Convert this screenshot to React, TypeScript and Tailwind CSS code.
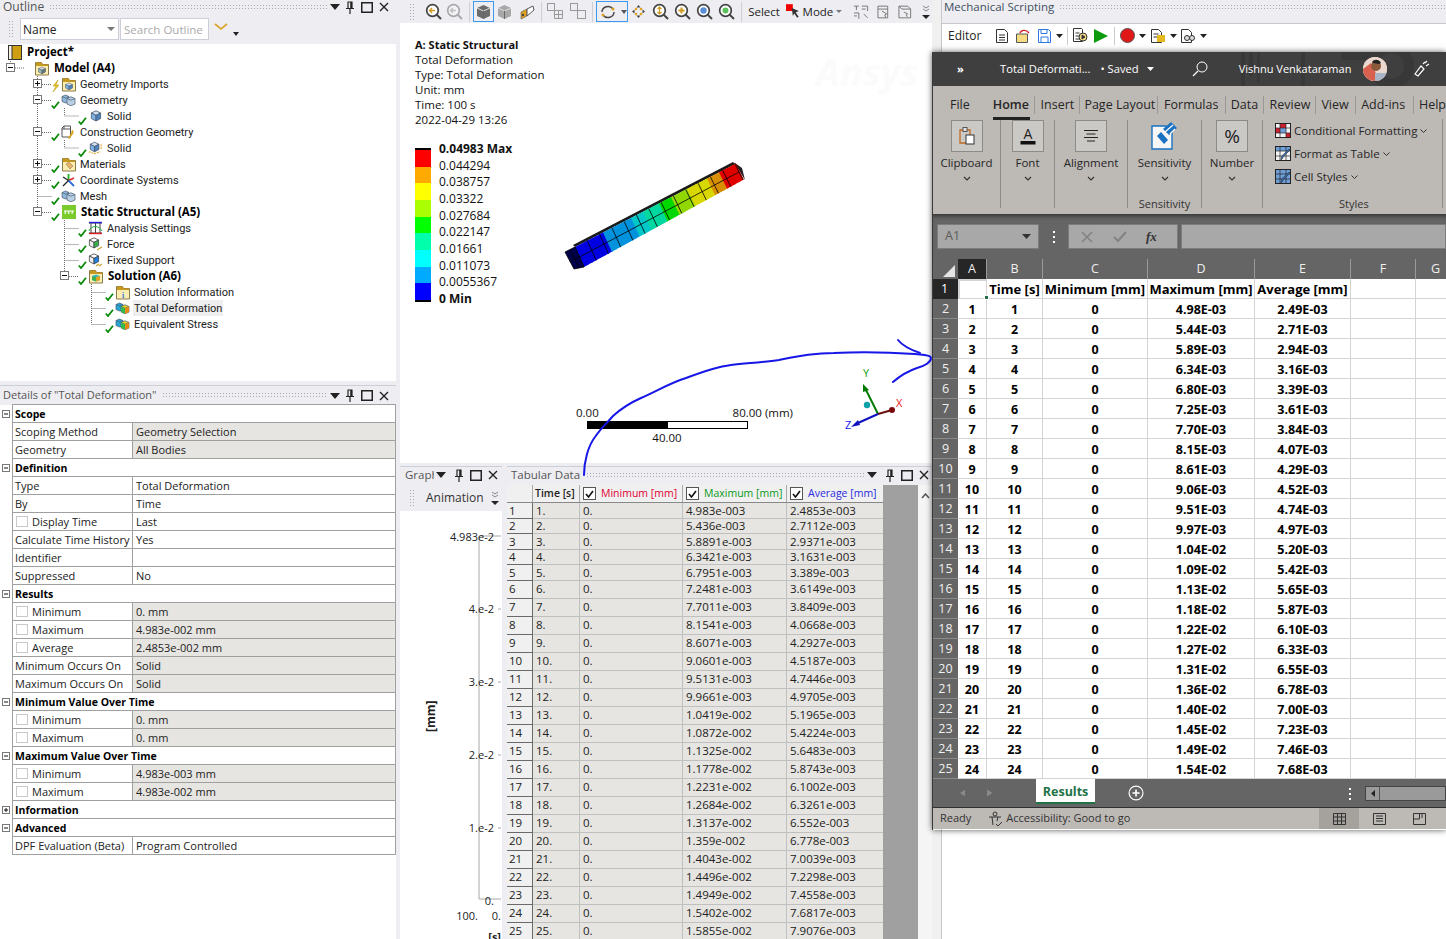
import React from "react";

const Pin = ({ c = "#222" }: { c?: string }) => (
  <svg width="10" height="13" viewBox="0 0 10 13"><path d="M2.5 1h5M3 1v6M7 1v6M1 7.5h8M5 8v5M5.8 1v6" stroke={c} strokeWidth="1.2" fill="none" /></svg>
);
const Controls = () => (
  <div className="flex items-center">
    <svg width="10" height="6" viewBox="0 0 10 6" className="mr-[5px]"><path d="M0 0h10L5 6z" fill="#222" /></svg>
    <Pin />
    <svg width="12" height="11" viewBox="0 0 12 11" className="ml-[6px]"><rect x=".75" y=".75" width="10.5" height="9.5" fill="none" stroke="#222" strokeWidth="1.5" /></svg>
    <svg width="10" height="10" viewBox="0 0 10 10" className="ml-[6px]"><path d="M1 1l8 8M9 1l-8 8" stroke="#222" strokeWidth="1.4" /></svg>
  </div>
);
const Dots = ({ className = "" }: { className?: string }) => (
  <div className={"bg-[radial-gradient(#a9a9b8_0.8px,transparent_0.9px)] bg-[length:3px_3px] " + className} />
);
const Check = () => (
  <svg width="9" height="8" viewBox="0 0 9 8" className="shrink-0 self-end mb-[-1px]"><path d="M.8 4.5L3 7 8 .8" stroke="#0a8a0a" strokeWidth="1.8" fill="none" /></svg>
);
const Folder = ({ children }: { children?: React.ReactNode }) => (
  <svg width="14" height="15" viewBox="0 0 14 15">
    <path d="M.5 4V1.5h6l1 2h6V14H.5z" fill="#fbeeb0" stroke="#8a7a48" />
    <path d="M1 1.5h5.5l1 2H13v1.5H1z" fill="#c79a1e" />
    {children}
  </svg>
);
const SmallCube = ({ f = "#7fb0e6", t = "#cfe2f7", s = "#4f82bf" }: { f?: string; t?: string; s?: string }) => (
  <g>
    <path d="M7 6l3.5 1.6L7 9.2 3.5 7.6z" fill={t} stroke="#456" strokeWidth=".5" />
    <path d="M3.5 7.6L7 9.2v3.6L3.5 11z" fill={f} stroke="#456" strokeWidth=".5" />
    <path d="M10.5 7.6L7 9.2v3.6l3.5-1.8z" fill={s} stroke="#456" strokeWidth=".5" />
  </g>
);
const Cube = ({ f = "#7fb0e6", t = "#cfe2f7", s = "#4f82bf" }: { f?: string; t?: string; s?: string }) => (
  <svg width="12" height="12" viewBox="0 0 12 12">
    <path d="M6 .8l4.6 2.2L6 5.4 1.4 3z" fill={t} stroke="#4a5a6a" strokeWidth=".8" />
    <path d="M1.4 3L6 5.4v5.6L1.4 8.6z" fill={f} stroke="#4a5a6a" strokeWidth=".8" />
    <path d="M10.6 3L6 5.4v5.6l4.6-2.4z" fill={s} stroke="#4a5a6a" strokeWidth=".8" />
  </svg>
);
const DoubleCube = ({ color = false }: { color?: boolean }) => (
  <svg width="15" height="12" viewBox="0 0 15 12">
    <path d="M1 2.5L4.5 1 8 2.5v5L4.5 9 1 7.5z" fill={color ? "#25a8d8" : "#8eb7dc"} stroke="#4a5a6a" strokeWidth=".7" />
    <path d="M1 2.5L4.5 4 8 2.5" stroke="#4a5a6a" strokeWidth=".7" fill="none" />
    <path d="M6 4.5L10 2.8l4 1.7v5.5L10 11.8 6 10z" fill={color ? "#e8d81e" : "#b8cfe5"} stroke="#4a5a6a" strokeWidth=".7" />
    <path d="M6 4.5L10 6.2l4-1.7" stroke="#4a5a6a" strokeWidth=".7" fill="none" />
    {color && <path d="M10 6.2l4-1.7v5.5L10 11.8z" fill="#e38a18" />}
    {color && <path d="M6 4.5l4 1.7v5.6L6 10z" fill="#35b850" />}
  </svg>
);

type Icon = "project" | "model" | "imports" | "geom" | "solid" | "cg" | "csolid" | "mat" | "coord" | "mesh" | "static" | "analysis" | "force" | "fixed" | "solution" | "info" | "result";
const TreeIcon = ({ k }: { k: Icon }) => {
  if (k === "project")
    return (
      <svg width="14" height="15" viewBox="0 0 14 15"><rect x=".5" y=".5" width="13" height="14" fill="#cf9f12" stroke="#333" /><rect x=".5" y=".5" width="3.5" height="14" fill="#f4efe0" stroke="#333" /></svg>
    );
  if (k === "model") return <Folder><SmallCube f="#9bb" t="#dde" s="#677" /></Folder>;
  if (k === "imports") return <Folder><SmallCube /></Folder>;
  if (k === "mat") return <Folder><path d="M4 7l3-2 4 4-3 3z" fill="#e4b36a" stroke="#a86" strokeWidth=".7" /></Folder>;
  if (k === "solution") return <Folder><path d="M3 7l4-1.5L11 7v4l-4 1.5L3 11z" fill="#2fb8c8" /><path d="M7 8v4.5L11 11V7z" fill="#e0a020" /><path d="M3 7l4 1.3V12.5L3 11z" fill="#40b050" /></Folder>;
  if (k === "info") return <Folder><text x="7" y="12.5" fontSize="8" textAnchor="middle" fill="#3a7be0" fontWeight="700" fontFamily="Liberation Serif">i</text></Folder>;
  if (k === "geom") return <DoubleCube />;
  if (k === "mesh") return <DoubleCube />;
  if (k === "result") return <DoubleCube color />;
  if (k === "solid") return <Cube />;
  if (k === "csolid")
    return (
      <svg width="16" height="14" viewBox="0 0 16 14"><g transform="translate(1,0)"><path d="M6 .8l4.6 2.2L6 5.4 1.4 3z" fill="#cfe2f7" stroke="#456" strokeWidth=".8" /><path d="M1.4 3L6 5.4v5.6L1.4 8.6z" fill="#7fb0e6" stroke="#456" strokeWidth=".8" /><path d="M10.6 3L6 5.4v5.6l4.6-2.4z" fill="#4f82bf" stroke="#456" strokeWidth=".8" /></g><path d="M1 11l6 2 6-2M14 3v5" stroke="#d8a420" strokeWidth="1.1" fill="none" strokeDasharray="2 1" /></svg>
    );
  if (k === "cg")
    return (
      <svg width="15" height="15" viewBox="0 0 15 15"><path d="M1 3l2-2h6.5v11H1zM3 1v3H1M3 4h6.5" fill="#fff" stroke="#555" /><path d="M12 5.5c-1 1-1 2-.5 2.5L7.5 13.5" stroke="#d8a420" strokeWidth="1.8" fill="none" /></svg>
    );
  if (k === "coord")
    return (
      <svg width="15" height="15" viewBox="0 0 15 15"><path d="M7.5 7.5V1" stroke="#20b020" strokeWidth="1.8" /><path d="M7.5 7.5L13 5" stroke="#e03030" strokeWidth="1.8" /><path d="M7.5 7.5L2 13" stroke="#222" strokeWidth="1.2" /><path d="M7.5 7.5L13 13" stroke="#2a6ae0" strokeWidth="1.8" /><path d="M7.5 7.5L2 4" stroke="#222" strokeWidth="1.2" /></svg>
    );
  if (k === "static")
    return (
      <svg width="14" height="14" viewBox="0 0 14 14"><rect width="14" height="14" fill="#7ccb2c" /><path d="M2 6h10M3.5 6L3 9M7 6l-.5 3M10.5 6L10 9" stroke="#fff" strokeWidth="1.2" fill="none" /></svg>
    );
  if (k === "analysis")
    return (
      <svg width="15" height="15" viewBox="0 0 15 15"><path d="M1 2h13M1 12h13M3 2v10M7.5 2v10M12 2v10" stroke="#444" strokeWidth="1" fill="none" /><path d="M1 1.5h13" stroke="#2020e0" strokeWidth="1.4" /><path d="M1 12.5h13" stroke="#e02020" strokeWidth="1.4" /><path d="M1 10C3 4 11 4 14 10" stroke="#20b040" fill="none" strokeWidth="1" /></svg>
    );
  const face = k === "force" ? "#34b34a" : "#1e82e0";
  return (
    <svg width="15" height="14" viewBox="0 0 15 14">
      <path d="M6 .8l4.6 2.2L6 5.4 1.4 3z" fill="#fff" stroke="#444" strokeWidth=".8" />
      <path d="M1.4 3L6 5.4v5.6L1.4 8.6z" fill="#eee" stroke="#444" strokeWidth=".8" />
      <path d="M10.6 3L6 5.4v5.6l4.6-2.4z" fill={face} stroke="#444" strokeWidth=".8" />
      <path d={k === "force" ? "M9 13l5-3" : "M8 13l3-2M11 13l3-2"} stroke="#c9a030" strokeWidth="1.3" />
    </svg>
  );
};

type TR = { t: string; l: number; i: Icon; b?: boolean; c?: boolean; bolt?: boolean; sel?: boolean };
const tree: TR[] = [
  { t: "Project*", l: 0, i: "project", b: true },
  { t: "Model (A4)", l: 1, i: "model", b: true },
  { t: "Geometry Imports", l: 2, i: "imports", bolt: true },
  { t: "Geometry", l: 2, i: "geom", c: true },
  { t: "Solid", l: 3, i: "solid", c: true },
  { t: "Construction Geometry", l: 2, i: "cg", c: true },
  { t: "Solid", l: 3, i: "csolid", c: true },
  { t: "Materials", l: 2, i: "mat", c: true },
  { t: "Coordinate Systems", l: 2, i: "coord", c: true },
  { t: "Mesh", l: 2, i: "mesh", c: true },
  { t: "Static Structural (A5)", l: 2, i: "static", b: true, c: true },
  { t: "Analysis Settings", l: 3, i: "analysis", c: true },
  { t: "Force", l: 3, i: "force", c: true },
  { t: "Fixed Support", l: 3, i: "fixed", c: true },
  { t: "Solution (A6)", l: 3, i: "solution", b: true, c: true },
  { t: "Solution Information", l: 4, i: "info", c: true },
  { t: "Total Deformation", l: 4, i: "result", c: true, sel: true },
  { t: "Equivalent Stress", l: 4, i: "result", c: true },
];

const Exp = ({ x, y, plus }: { x: number; y: number; plus?: boolean }) => (
  <g>
    <rect x={x + 0.5} y={y - 4.5} width="8" height="8" fill="#fff" stroke="#7a7a7a" />
    <path d={`M${x + 2} ${y - 0.5}h5`} stroke="#111" />
    {plus && <path d={`M${x + 4.5} ${y - 3}v5`} stroke="#111" />}
  </g>
);
const ry = (k: number) => 52 + 16 * k - 44;
const TreeLines = () => (
  <svg width="396" height="337" className="absolute left-0 top-0">
    <g stroke="#6f6f6f" strokeDasharray="1 1" fill="none">
      <path d={`M10.5 ${ry(0) + 7}V${ry(1) - 4}`} />
      <path d={`M15 ${ry(1)}H25`} />
      <path d={`M37.5 ${ry(1) + 8}V${ry(10) - 4}`} />
      {[2, 3, 5, 7, 8, 10].map((k) => <path key={k} d={`M42 ${ry(k) + 0.5}H52`} />)}
      <path d={`M37.5 ${ry(9) + 0.5}H52`} />
      <path d={`M64.5 ${ry(3) + 8}V${ry(4)}H79`} />
      <path d={`M64.5 ${ry(5) + 8}V${ry(6)}H79`} />
      <path d={`M64.5 ${ry(10) + 8}V${ry(14) - 4}`} />
      {[11, 12, 13].map((k) => <path key={k} d={`M64.5 ${ry(k) + 0.5}H79`} />)}
      <path d={`M69 ${ry(14) + 0.5}H79`} />
      <path d={`M91.5 ${ry(14) + 8}V${ry(17)}`} />
      {[15, 16, 17].map((k) => <path key={k} d={`M91.5 ${ry(k) + 0.5}H106`} />)}
    </g>
    <Exp x={6} y={ry(1)} />
    <Exp x={33} y={ry(2)} plus />
    <Exp x={33} y={ry(3)} />
    <Exp x={33} y={ry(5)} />
    <Exp x={33} y={ry(7)} plus />
    <Exp x={33} y={ry(8)} plus />
    <Exp x={33} y={ry(10)} />
    <Exp x={60} y={ry(14)} />
  </svg>
);

const Outline = () => (
  <div className="h-[381px] flex flex-col">
    <div className="h-[14px] flex items-center pl-[3px] pr-[7px] bg-[#eeeef2]">
      <span className="text-[12px] leading-[14px] text-[#555]">Outline</span>
      <Dots className="flex-1 h-[7px] ml-[5px] mr-[3px]" />
      <Controls />
    </div>
    <div className="h-[30px] flex items-center bg-[#eeeef2]">
      <Dots className="w-[6px] h-[18px] ml-[8px] mr-[6px]" />
      <div className="w-[99px] h-[22px] bg-white border border-[#ccced8] flex items-center justify-between pl-[2px] pr-[3px]">
        <span className="text-[12px] text-[#222] pt-[2px]">Name</span>
        <svg width="8" height="4" viewBox="0 0 8 4"><path d="M0 0h8L4 4z" fill="#777" /></svg>
      </div>
      <div className="w-[89px] h-[22px] ml-px bg-white border border-[#ccced8] flex items-center pl-[3px]">
        <span className="text-[11.5px] text-[#aaa] pt-[2px]">Search Outline</span>
      </div>
      <svg width="14" height="8" viewBox="0 0 14 8" className="ml-[5px] mb-[4px]"><path d="M1 1l6 5 6-5" stroke="#d8a42c" strokeWidth="1.7" fill="none" /></svg>
      <svg width="6" height="4" viewBox="0 0 6 4" className="ml-[5px] mt-[10px]"><path d="M0 0h6L3 4z" fill="#222" /></svg>
    </div>
    <div className="flex-1 bg-white relative">
      <TreeLines />
      <div className="relative">
        {tree.map((r, n) => {
          const left = 27 * r.l + 7;
          return (
            <div key={n} className="h-4 flex items-center" style={{ paddingLeft: left }}>
              {r.l > 0 && (
                <div className="w-[10px] h-[15px] -ml-[10px] flex items-end shrink-0">
                  {r.c && <Check />}
                  {r.bolt && <svg width="9" height="12" viewBox="0 0 9 12"><path d="M7 0L2 6h3l-3 6 6-7H5z" fill="#e8c820" stroke="#b89010" strokeWidth=".5" /></svg>}
                </div>
              )}
              <div className="w-[15px] h-4 flex items-center justify-center shrink-0"><TreeIcon k={r.i} /></div>
              {r.b ? (
                <span className="ml-[4px] px-px text-[11.5px] leading-4 font-bold text-black whitespace-nowrap">{r.t}</span>
              ) : (
                <span className={"ml-[3px] px-px pt-px h-4 font-['Roboto',sans-serif] text-[11px] leading-[15px] whitespace-nowrap text-[#222] " + (r.sel ? "bg-[#eeeeee]" : "")}>{r.t}</span>
              )}
            </div>
          );
        })}
      </div>
    </div>
  </div>
);

type DR = { h?: boolean; plus?: boolean; a: string; v?: string; g?: boolean; cb?: boolean };
const details: DR[] = [
  { h: true, a: "Scope" },
  { a: "Scoping Method", v: "Geometry Selection", g: true },
  { a: "Geometry", v: "All Bodies", g: true },
  { h: true, a: "Definition" },
  { a: "Type", v: "Total Deformation" },
  { a: "By", v: "Time" },
  { a: "Display Time", v: "Last", cb: true },
  { a: "Calculate Time History", v: "Yes" },
  { a: "Identifier", v: "" },
  { a: "Suppressed", v: "No" },
  { h: true, a: "Results" },
  { a: "Minimum", v: "0. mm", g: true, cb: true },
  { a: "Maximum", v: "4.983e-002 mm", g: true, cb: true },
  { a: "Average", v: "2.4853e-002 mm", g: true, cb: true },
  { a: "Minimum Occurs On", v: "Solid", g: true },
  { a: "Maximum Occurs On", v: "Solid", g: true },
  { h: true, a: "Minimum Value Over Time" },
  { a: "Minimum", v: "0. mm", g: true, cb: true },
  { a: "Maximum", v: "0. mm", g: true, cb: true },
  { h: true, a: "Maximum Value Over Time" },
  { a: "Minimum", v: "4.983e-003 mm", g: true, cb: true },
  { a: "Maximum", v: "4.983e-002 mm", g: true, cb: true },
  { h: true, plus: true, a: "Information" },
  { h: true, a: "Advanced" },
  { a: "DPF Evaluation (Beta)", v: "Program Controlled" },
];

const Details = () => (
  <div className="flex-1 flex flex-col mt-[4px] bg-white">
    <div className="h-[20px] flex items-center pl-[3px] pr-[7px] bg-[#eeeef2] border-t border-[#ccced8]">
      <span className="text-[11px] text-[#555] whitespace-nowrap">Details of "Total Deformation"</span>
      <Dots className="flex-1 h-[7px] ml-[6px] mr-[3px]" />
      <Controls />
    </div>
    <div className="w-[396px]">
      {details.map((d, n) => (
        <div key={n} className="flex h-[18px]">
          <div className="w-[12px] flex items-center justify-center shrink-0">
            {d.h && (
              <svg width="8" height="8" viewBox="0 0 8 8"><rect x=".5" y=".5" width="7" height="7" fill="#fff" stroke="#777" /><path d="M2 4h4" stroke="#111" />{d.plus && <path d="M4 2v4" stroke="#111" />}</svg>
            )}
          </div>
          <div className={"flex-1 flex border-l border-b border-r border-[#a0a0a0] " + (n === 0 ? "border-t -mt-px h-[19px] " : "")}>
            {d.h ? (
              <div className="pl-[2px] text-[10.5px] font-bold leading-[18px] text-black whitespace-nowrap">{d.a}</div>
            ) : (
              <>
                <div className="w-[120px] shrink-0 pl-[2px] flex items-center border-r border-[#a0a0a0] text-[11px] leading-[17px] text-[#222] whitespace-nowrap overflow-hidden">
                  {d.cb && <span className="w-[12px] h-[11px] ml-px bg-white border border-[#c8c8c8] mr-[4px] shrink-0" />}
                  {d.a}
                </div>
                <div className={"flex-1 pl-[3px] text-[11px] leading-[17px] text-[#222] whitespace-nowrap " + (d.g ? "bg-[#e6e5e1]" : "")}>{d.v}</div>
              </>
            )}
          </div>
        </div>
      ))}
    </div>
  </div>
);

const Mag = ({ inner, faded }: { inner: React.ReactNode; faded?: boolean }) => (
  <svg width="17" height="17" viewBox="0 0 17 17" className={faded ? "opacity-40" : ""}>
    <circle cx="7.5" cy="7.5" r="5.8" fill="#fff" stroke="#444" strokeWidth="1.7" />
    <path d="M11.5 11.5L16 16" stroke="#444" strokeWidth="2" />
    {inner}
  </svg>
);
const Shaded = ({ c = "#8a8a8a" }: { c?: string }) => (
  <svg width="15" height="16" viewBox="0 0 15 16"><path d="M7.5 1L14 4v8l-6.5 3L1 12V4z" fill={c} /><path d="M1 4l6.5 3L14 4" stroke="#ddd" fill="none" /><path d="M7.5 7v8" stroke="#666" /></svg>
);
const Sep = ({ className = "" }: { className?: string }) => <div className={"w-px h-[20px] bg-[#cfcfd6] " + className} />;
const GridPair = ({ b }: { b?: boolean }) => (
  <svg width="17" height="17" viewBox="0 0 17 17" fill="none" stroke="#999"><rect x=".5" y=".5" width="7" height="7" />{b ? <rect x="7.5" y="7.5" width="8" height="8" /> : <path d="M7.5 7.5h8v8h-8zM11.5 7.5v8M7.5 11.5h8" />}</svg>
);
const Toolbar = () => (
  <div className="h-[23px] flex items-center bg-[#eeeef2] pr-[2px]">
    <Dots className="w-[6px] h-[18px] ml-[9px]" />
    <div className="ml-[10px]"><Mag inner={<path d="M10 7.5H5M7 5L4.5 7.5 7 10" stroke="#d09a20" strokeWidth="1.3" fill="none" />} /></div>
    <div className="ml-[4px]"><Mag faded inner={<path d="M10 7.5H5M7 5L4.5 7.5 7 10" stroke="#777" strokeWidth="1.3" fill="none" />} /></div>
    <Sep className="ml-[6px]" />
    <div className="ml-[3px] w-[22px] h-[21px] border border-[#3b99f0] flex items-center justify-center"><Shaded c="#6c6c6c" /></div>
    <div className="ml-[3px]"><Shaded c="#a8a8a8" /></div>
    <div className="ml-[7px]">
      <svg width="16" height="16" viewBox="0 0 16 16"><path d="M2 8l6-3v7l-6 3z" fill="#e0a420" stroke="#555" strokeWidth=".6" /><path d="M8 5l6-3 1 4-7 6z" fill="#fff" stroke="#555" /><circle cx="4" cy="11" r="1.2" fill="#444" /></svg>
    </div>
    <Sep className="ml-[6px]" />
    <div className="ml-[5px]"><GridPair /></div>
    <div className="ml-[6px]"><GridPair b /></div>
    <Sep className="ml-[5px]" />
    <div className="ml-[3px] w-[32px] h-[21px] border border-[#3b99f0] flex items-center pl-[3px]">
      <svg width="16" height="14" viewBox="0 0 16 14" fill="none"><path d="M2 7a6 5.5 0 0 1 11-3" stroke="#444" strokeWidth="1.4" /><path d="M14 7a6 5.5 0 0 1-11 3" stroke="#444" strokeWidth="1.4" /><circle cx="13" cy="4" r="1.5" fill="#d8a020" /><circle cx="3" cy="10" r="1.5" fill="#d8a020" /></svg>
      <svg width="6" height="4" viewBox="0 0 6 4" className="ml-[5px]"><path d="M0 0h6L3 4z" fill="#555" /></svg>
    </div>
    <div className="ml-[3px]">
      <svg width="15" height="15" viewBox="0 0 15 15"><path d="M7.5 1L5.5 3.5h4zM7.5 14l-2-2.5h4zM1 7.5l2.5-2v4zM14 7.5l-2.5-2v4z" fill="#444" /><circle cx="5" cy="5" r="1.3" fill="#e0a420" /><circle cx="10" cy="5" r="1.3" fill="#e0a420" /><circle cx="5" cy="10" r="1.3" fill="#e0a420" /><circle cx="10" cy="10" r="1.3" fill="#e0a420" /></svg>
    </div>
    <div className="ml-[6px]"><Mag inner={<path d="M7.5 4v7M5.5 6l2-2 2 2M5.5 9l2 2 2-2" stroke="#d09a20" strokeWidth="1.2" fill="none" />} /></div>
    <div className="ml-[5px]"><Mag inner={<path d="M7.5 4.5v6M4.5 7.5h6" stroke="#d09a20" strokeWidth="2" />} /></div>
    <div className="ml-[5px]"><Mag inner={<circle cx="7.5" cy="7.5" r="3.2" fill="#5a8fd8" />} /></div>
    <div className="ml-[5px]"><Mag inner={<circle cx="7.5" cy="7.5" r="3" fill="#5cc05c" />} /></div>
    <Sep className="ml-[6px]" />
    <span className="ml-[6px] text-[11.5px] text-[#222]">Select</span>
    <svg width="15" height="15" viewBox="0 0 15 15" className="ml-[6px]"><rect width="7" height="7" fill="#f00000" /><path d="M6 4l7 3-3 1.5L13 13l-1.5 1L8.5 9.5 7 12z" fill="#333" /></svg>
    <span className="ml-[2px] text-[11.5px] text-[#222]">Mode</span>
    <svg width="6" height="3" viewBox="0 0 6 3" className="ml-[3px]"><path d="M0 0h6L3 3z" fill="#777" /></svg>
    <svg width="16" height="16" viewBox="0 0 16 16" className="ml-[11px]" fill="none" stroke="#777"><path d="M1 2h5M3.5 2v4M1 9h5v6M9 2h6v5M11 10l4 4" /><path d="M9 5h4M1 12h3" /></svg>
    <svg width="15" height="16" viewBox="0 0 15 16" className="ml-[7px]" fill="none" stroke="#777"><path d="M2 2h10v12H2zM2 5h10" /><path d="M6 7l5 3-2 1 1 3" /></svg>
    <svg width="15" height="16" viewBox="0 0 15 16" className="ml-[7px]" fill="none" stroke="#777"><path d="M2 2h9l3 3v9H2zM2 2l3 3h9" /><path d="M7 8l4 2-1.5 1 1 2" /></svg>
    <div className="ml-[10px] flex flex-col items-center gap-[3px]">
      <svg width="8" height="7" viewBox="0 0 8 7" fill="none" stroke="#888"><path d="M1 1l3 2 3-2M1 4l3 2 3-2" /></svg>
      <svg width="8" height="4" viewBox="0 0 8 4"><path d="M0 0h8L4 4z" fill="#222" /></svg>
    </div>
  </div>
);

const legendColors = ["#ff0000", "#ffaa00", "#ffff00", "#aaff00", "#00ff00", "#00ffaa", "#00ffff", "#00aaff", "#0000ff"];
const legendLabels = ["0.044294", "0.038757", "0.03322", "0.027684", "0.022147", "0.01661", "0.011073", "0.0055367"];

const beamColor = (t: number) => {
  const bands: [number, string][] = [[0.17, "#0000e0"], [0.33, "#0092dc"], [0.42, "#00c8c8"], [0.51, "#00d8a0"], [0.6, "#00d800"], [0.7, "#90d800"], [0.82, "#d8d800"], [0.9, "#d89000"], [1.01, "#e00000"]];
  return bands.find((b) => t < b[0])![1];
};
const lerp = (a: number[], b: number[], t: number) => [a[0] + (b[0] - a[0]) * t, a[1] + (b[1] - a[1]) * t];
const Beam = () => {
  const A = [575, 247], B = [735, 164], C = [584, 267], D = [743, 180];
  const pts = (p: number[][]) => p.map((q) => q.join(",")).join(" ");
  const N = 40, cells = 13;
  return (
    <svg width="200" height="120" viewBox="560 155 200 120" className="absolute left-[160px] top-[132px]">
      <polygon points="575,246 735,163 742,168 745,180 735,164" fill="#222" />
      <polygon points="575,247 573,245 733,162 735,164" fill="#1a1a1a" />
      {Array.from({ length: N }).map((_, i) => {
        const a = i / N, b = (i + 1.2) / N;
        return <polygon key={i} points={pts([lerp(A, B, a), lerp(A, B, b), lerp(C, D, b), lerp(C, D, a)])} fill={beamColor(a)} />;
      })}
      {Array.from({ length: cells + 1 }).map((_, i) => {
        const t = i / cells;
        const p = lerp(A, B, t), q = lerp(C, D, t);
        return <line key={i} x1={p[0]} y1={p[1]} x2={q[0]} y2={q[1]} stroke="#000" strokeWidth=".8" />;
      })}
      <line x1={(A[0] + C[0]) / 2} y1={(A[1] + C[1]) / 2} x2={(B[0] + D[0]) / 2} y2={(B[1] + D[1]) / 2} stroke="#000" strokeWidth=".8" />
      <polygon points="565,252 575,247 584,267 574,269" fill="#00004a" stroke="#000" strokeWidth=".8" />
      <line x1="570" y1="249.5" x2="579" y2="268" stroke="#000" strokeWidth=".7" />
      <line x1="569.5" y1="261" x2="579.5" y2="257" stroke="#000" strokeWidth=".7" />
    </svg>
  );
};

const Viewport = () => (
  <div className="h-[440px] bg-white relative overflow-hidden text-[#111]">
    <span className="absolute left-[416px] top-[20px] text-[38px] font-bold italic text-[#fbfbfb] whitespace-nowrap">Ansys</span>
    <div className="pl-[15px] pt-[14px] text-[11.5px] leading-[15px]">
      <div className="font-bold text-[11px]">A: Static Structural</div>
      <div>Total Deformation</div>
      <div>Type: Total Deformation</div>
      <div>Unit: mm</div>
      <div>Time: 100 s</div>
      <div>2022-04-29 13:26</div>
    </div>
    <div className="ml-[15px] mt-[19px] flex">
      <div className="w-[16px] border-t-[2px] border-b-[2px] border-black flex flex-col h-[154px] mt-[2px] shrink-0">
        {legendColors.map((c) => <div key={c} className="flex-1" style={{ background: c }} />)}
      </div>
      <div className="ml-[8px] text-[12px] leading-[16.67px] -mt-[5px] whitespace-nowrap">
        <div className="font-bold">0.04983 Max</div>
        {legendLabels.map((l) => <div key={l}>{l}</div>)}
        <div className="font-bold">0 Min</div>
      </div>
    </div>
    <Beam />
    <div className="absolute left-[187px] top-[383px] w-[161px]">
      <div className="flex justify-between text-[11.5px] leading-[14px] whitespace-nowrap -mb-[1px]"><span className="-ml-[11px]">0.00</span><span className="-mr-[45px]">80.00 (mm)</span></div>
      <div className="h-[8px] border border-black flex bg-white mt-[2px]"><div className="w-[80px] bg-black" /></div>
      <div className="text-center text-[11.5px] leading-[14px] mt-[2px] -ml-[1px]">40.00</div>
    </div>
    <svg width="70" height="70" viewBox="0 0 70 70" className="absolute left-[442px] top-[340px]">
      <line x1="36" y1="51" x2="23" y2="25" stroke="#007a00" strokeWidth="2" />
      <path d="M21 21l6 6-6 2z" fill="#007a00" />
      <line x1="36" y1="51" x2="50" y2="47" stroke="#6a1010" strokeWidth="2" />
      <circle cx="50" cy="47" r="3" fill="#7a0a0a" />
      <circle cx="25" cy="42" r="3.2" fill="#10a0a8" />
      <line x1="36" y1="51" x2="16" y2="60" stroke="#1010c0" strokeWidth="2" />
      <path d="M9 64l7-7 2 5z" fill="#1010c0" />
      <text x="21" y="14" fontSize="11" fill="#10a010">Y</text>
      <text x="54" y="44" fontSize="11" fill="#ee2020">X</text>
      <text x="3" y="66" fontSize="11" fill="#2020ee">Z</text>
    </svg>
  </div>
);

const Controls2 = () => (
  <div className="flex items-center">
    <svg width="10" height="6" viewBox="0 0 10 6" className="mr-[8px]"><path d="M0 0h10L5 6z" fill="#222" /></svg>
    <Pin />
    <svg width="12" height="11" viewBox="0 0 12 11" className="ml-[6px]"><rect x=".75" y=".75" width="10.5" height="9.5" fill="none" stroke="#222" strokeWidth="1.5" /></svg>
    <svg width="10" height="10" viewBox="0 0 10 10" className="ml-[6px]"><path d="M1 1l8 8M9 1l-8 8" stroke="#222" strokeWidth="1.4" /></svg>
  </div>
);

const Graph = () => (
  <div className="w-[102px] flex flex-col shrink-0 bg-white">
    <div className="h-[19px] flex items-center bg-[#eeeef2] border-t border-[#ccced8] pl-[5px] pr-[4px] pb-[2px] justify-between">
      <span className="text-[11.5px] text-[#555] w-[29px] overflow-hidden whitespace-nowrap">Graph</span>
      <Controls2 />
    </div>
    <div className="h-[26px] flex items-center bg-[#eeeef2]">
      <Dots className="w-[6px] h-[18px] ml-[9px]" />
      <span className="ml-[11px] text-[12px] text-[#333]">Animation</span>
      <div className="ml-[7px] flex flex-col items-center gap-[3px]">
        <svg width="8" height="7" viewBox="0 0 8 7" fill="none" stroke="#888"><path d="M1 1l3 2 3-2M1 4l3 2 3-2" /></svg>
        <svg width="8" height="4" viewBox="0 0 8 4"><path d="M0 0h8L4 4z" fill="#222" /></svg>
      </div>
    </div>
    <svg width="102" height="428" viewBox="400 511 102 428" className="block" fontFamily="Open Sans" fontSize="11" fill="#222">
      <path d="M479 536V899H501M479 536H501M498 609h3M498 682h3M498 755h3M498 828h3" stroke="#a8a8a8" fill="none" />
      <text x="494" y="541" textAnchor="end">4.983e-2</text>
      <text x="494" y="613" textAnchor="end">4.e-2</text>
      <text x="494" y="686" textAnchor="end">3.e-2</text>
      <text x="494" y="759" textAnchor="end">2.e-2</text>
      <text x="494" y="832" textAnchor="end">1.e-2</text>
      <text x="494" y="905" textAnchor="end">0.</text>
      <text x="478" y="920" textAnchor="end">100.</text>
      <text x="501" y="920" textAnchor="end">0.</text>
      <text x="501" y="941" textAnchor="end" fontWeight="700">[s]</text>
      <text x="0" y="0" fontWeight="700" fontSize="12" transform="translate(435,732) rotate(-90)">[mm]</text>
    </svg>
  </div>
);

const maxV = ["4.983e-003", "5.436e-003", "5.8891e-003", "6.3421e-003", "6.7951e-003", "7.2481e-003", "7.7011e-003", "8.1541e-003", "8.6071e-003", "9.0601e-003", "9.5131e-003", "9.9661e-003", "1.0419e-002", "1.0872e-002", "1.1325e-002", "1.1778e-002", "1.2231e-002", "1.2684e-002", "1.3137e-002", "1.359e-002", "1.4043e-002", "1.4496e-002", "1.4949e-002", "1.5402e-002", "1.5855e-002"];
const avgV = ["2.4853e-003", "2.7112e-003", "2.9371e-003", "3.1631e-003", "3.389e-003", "3.6149e-003", "3.8409e-003", "4.0668e-003", "4.2927e-003", "4.5187e-003", "4.7446e-003", "4.9705e-003", "5.1965e-003", "5.4224e-003", "5.6483e-003", "5.8743e-003", "6.1002e-003", "6.3261e-003", "6.552e-003", "6.778e-003", "7.0039e-003", "7.2298e-003", "7.4558e-003", "7.6817e-003", "7.9076e-003"];

const TabCheck = () => (
  <span className="w-[13px] h-[13px] bg-white border border-[#555] mr-[5px] flex items-center justify-center shrink-0">
    <svg width="9" height="8" viewBox="0 0 9 8"><path d="M1 4l2.5 3L8 1" stroke="#111" strokeWidth="1.6" fill="none" /></svg>
  </span>
);

const Tabular = () => (
  <div className="flex-1 flex flex-col ml-[5px] min-w-0">
    <div className="h-[19px] flex items-center bg-[#eeeef2] border-t border-[#ccced8] pl-[4px] pr-[3px] pb-[2px]">
      <span className="text-[11.5px] text-[#555] whitespace-nowrap">Tabular Data</span>
      <Dots className="flex-1 h-[7px] ml-[6px] mr-[3px]" />
      <Controls2 />
    </div>
    <div className="flex flex-1 min-h-0">
      <div className="w-[376px] shrink-0 text-[11.5px] text-[#222] overflow-hidden">
        <div className="flex h-[18px] bg-[#f0f0f0] border-b border-[#888] text-[10.5px]">
          <div className="w-[26px] border-r border-[#aaa]" />
          <div className="w-[47px] border-r border-[#aaa] pl-[2px] leading-[16px] font-semibold whitespace-nowrap">Time [s]</div>
          <div className="w-[103px] border-r border-[#aaa] pl-[3px] flex items-center text-[#e00030] whitespace-nowrap"><TabCheck />Minimum [mm]</div>
          <div className="w-[104px] border-r border-[#aaa] pl-[3px] flex items-center text-[#0a9a1a] whitespace-nowrap"><TabCheck />Maximum [mm]</div>
          <div className="flex-1 pl-[3px] flex items-center text-[#2a2ae0] whitespace-nowrap"><TabCheck />Average [mm]</div>
        </div>
        {maxV.map((m, i) => (
          <div key={i} className={"flex " + (i < 5 ? "h-[15.5px]" : "h-[18px]")}>
            <div className="w-[26px] bg-[#f0f0f0] border-r border-b border-[#6a6a6a] pl-[2px] flex items-center">{i + 1}</div>
            <div className="w-[47px] bg-[#e6e5e1] border-r border-b border-[#c0c0c0] pl-[3px] flex items-center">{i + 1}.</div>
            <div className="w-[103px] bg-[#e6e5e1] border-r border-b border-[#c0c0c0] pl-[3px] flex items-center">0.</div>
            <div className="w-[104px] bg-[#e6e5e1] border-r border-b border-[#c0c0c0] pl-[3px] flex items-center">{m}</div>
            <div className="flex-1 bg-[#e6e5e1] border-b border-[#c0c0c0] pl-[3px] flex items-center">{avgV[i]}</div>
          </div>
        ))}
      </div>
      <div className="w-[35px] bg-[#a0a0a0]" />
      <div className="flex-1 bg-[#f5f5f5] flex justify-center pt-[8px]">
        <svg width="9" height="6" viewBox="0 0 9 6" fill="none" stroke="#555" strokeWidth="1.5"><path d="M1 5l3.5-4L8 5" /></svg>
      </div>
    </div>
  </div>
);

const colW = ["w-[29px]", "w-[56px]", "w-[105px]", "w-[107px]", "w-[96px]", "w-[65px]", "w-[40px]"];
const colL = ["A", "B", "C", "D", "E", "F", "G"];
const xD = ["4.98E-03", "5.44E-03", "5.89E-03", "6.34E-03", "6.80E-03", "7.25E-03", "7.70E-03", "8.15E-03", "8.61E-03", "9.06E-03", "9.51E-03", "9.97E-03", "1.04E-02", "1.09E-02", "1.13E-02", "1.18E-02", "1.22E-02", "1.27E-02", "1.31E-02", "1.36E-02", "1.40E-02", "1.45E-02", "1.49E-02", "1.54E-02"];
const xE = ["2.49E-03", "2.71E-03", "2.94E-03", "3.16E-03", "3.39E-03", "3.61E-03", "3.84E-03", "4.07E-03", "4.29E-03", "4.52E-03", "4.74E-03", "4.97E-03", "5.20E-03", "5.42E-03", "5.65E-03", "5.87E-03", "6.10E-03", "6.33E-03", "6.55E-03", "6.78E-03", "7.00E-03", "7.23E-03", "7.46E-03", "7.68E-03"];

const Cell = ({ w, c, cls = "" }: { w: number; c?: string; cls?: string }) => (
  <div className={colW[w] + " shrink-0 h-full border-r border-b border-[#d4d4d4] flex items-center justify-center pt-[3px] font-bold text-black whitespace-nowrap " + cls}>{c}</div>
);

const RBtn = ({ children }: { children: React.ReactNode }) => (
  <div className="w-[32px] h-[32px] bg-[#cbc9c6] border border-[#8d8b88] flex items-center justify-center">{children}</div>
);
const Caret = () => (
  <svg width="8" height="5" viewBox="0 0 8 5" fill="none" stroke="#333" strokeWidth="1.2"><path d="M1 1l3 3 3-3" /></svg>
);
const RGroup = ({ w, label, children, name }: { w: string; label: string; children: React.ReactNode; name?: string }) => (
  <div className={w + " h-[88px] mt-[6px] border-r border-[#8f8d8a] flex flex-col items-center relative shrink-0"}>
    {children}
    <span className="text-[11.5px] leading-[16px] mt-[3px] text-[#262626] whitespace-nowrap">{label}</span>
    <div className="mt-[5px]"><Caret /></div>
    {name && <span className="absolute bottom-[-3px] text-[11px] leading-[14px] text-[#333] whitespace-nowrap">{name}</span>}
  </div>
);
const StyleRow = ({ t, icon }: { t: string; icon: React.ReactNode }) => (
  <div className="h-[23px] flex items-center">
    {icon}
    <span className="ml-[3px] text-[11.5px] text-[#262626] whitespace-nowrap">{t}</span>
    <svg width="7" height="4" viewBox="0 0 7 4" fill="none" stroke="#333" className="ml-[3px]"><path d="M.5.5l3 3 3-3" /></svg>
  </div>
);
const GridIco = ({ mode }: { mode: "cf" | "tbl" | "cs" }) => (
  <svg width="16" height="15" viewBox="0 0 16 15">
    <rect x=".5" y=".5" width="15" height="14" fill="#f4f4f4" stroke="#222" />
    {mode === "cf" && <path d="M1 5h4v5H1z" fill="#d02030" />}
    {mode === "cf" && <path d="M5 1h6v4H5zM11 10h4v4h-4z" fill="#d02030" />}
    {mode === "cf" && <path d="M5 5h6v5H5z" fill="#6f9fd8" />}
    {mode !== "cf" && <path d="M1 1h14v4H1z" fill="#6f9fd8" />}
    {mode === "cs" && <path d="M1 5h14v9H1z" fill="#6f9fd8" />}
    <path d="M5 1v13M11 1v13M1 5h14M1 10h14" stroke="#222" strokeWidth=".7" />
    {mode !== "cf" && <path d="M6 14c2-1 2-4 4-5l5-5-1-1-5 5c-2 1-3 3-3 6z" fill="#3b6fb6" stroke="#222" strokeWidth=".5" />}
  </svg>
);

const Excel = () => (
  <div className="absolute left-[932px] top-[52px] w-[514px] h-[778px] flex flex-col overflow-hidden border-l border-[#3a3a3a] shadow-[0_0_6px_rgba(0,0,0,0.65)] z-10">
    <div className="h-[34px] bg-[#3f3f3f] relative flex items-center text-white shrink-0">
      <svg width="200" height="34" viewBox="0 0 200 34" className="absolute right-[5px] top-0 opacity-50" fill="#333">
        <rect x="0" y="0" width="4" height="34" /><rect x="8" y="0" width="4" height="24" /><rect x="16" y="0" width="3" height="30" /><rect x="60" y="0" width="4" height="34" /><circle cx="150" cy="14" r="18" fill="none" stroke="#333" strokeWidth="10" /><rect x="100" y="0" width="30" height="8" />
      </svg>
      <span className="relative ml-[24px] text-[11px] font-bold w-[43px]">»</span>
      <span className="relative text-[11.2px] whitespace-nowrap">Total Deformati...</span>
      <span className="relative ml-[10px] text-[11.2px] whitespace-nowrap">• Saved</span>
      <svg width="7" height="4" viewBox="0 0 7 4" className="relative ml-[8px]"><path d="M0 0h7L3.5 4z" fill="#fff" /></svg>
      <svg width="16" height="16" viewBox="0 0 16 16" fill="none" stroke="#fff" className="relative ml-[38px]"><circle cx="10" cy="6" r="5" /><path d="M6 10l-5 5" strokeWidth="1.3" /></svg>
      <span className="relative ml-[31px] text-[11px] whitespace-nowrap">Vishnu Venkataraman</span>
      <div className="relative ml-[12px] w-[24px] h-[24px] rounded-full overflow-hidden bg-[#e8d8d0] shrink-0">
        <svg width="24" height="24" viewBox="0 0 24 24"><rect width="24" height="24" fill="#ead8cf" /><path d="M0 12l8-6 4 8 4 10H0z" fill="#d8604f" /><circle cx="13" cy="9" r="5" fill="#8a5a3a" /><path d="M9 5c2-3 7-3 9 1l-2 1-6-1z" fill="#222" /><path d="M12 16h12v8H12z" fill="#a8b4c8" /></svg>
      </div>
      <svg width="18" height="18" viewBox="0 0 18 18" fill="none" stroke="#fff" className="relative ml-[26px] shrink-0"><path d="M2 14l3 2 6-7-3-3zM10 4l2-2M13 6l3-2M12 3l2-2" strokeWidth="1.2" /></svg>
    </div>
    <div className="h-[128px] bg-[#bdb9b5] shrink-0 flex flex-col">
      <div className="h-[28px] flex items-end text-[12.5px] text-[#262626] whitespace-nowrap">
        <div className="w-[60px] pl-[17px] h-[18px] leading-[18px]">File</div>
        <div className="w-[42px] h-[18px] leading-[18px] border-r border-[#9b9794] relative font-semibold">Home<div className="absolute left-0 top-[21px] w-[37px] h-[3px] bg-[#222]" /></div>
        <div className="w-[46px] pl-[6px] h-[18px] leading-[18px] border-r border-[#9b9794]">Insert</div>
        <div className="w-[78px] pl-[4px] h-[18px] leading-[18px] border-r border-[#9b9794] overflow-hidden">Page Layout</div>
        <div className="w-[68px] pl-[6px] h-[18px] leading-[18px] border-r border-[#9b9794]">Formulas</div>
        <div className="w-[38px] pl-[5px] h-[18px] leading-[18px] border-r border-[#9b9794]">Data</div>
        <div className="w-[53px] pl-[6px] h-[18px] leading-[18px] border-r border-[#9b9794]">Review</div>
        <div className="w-[40px] pl-[5px] h-[18px] leading-[18px] border-r border-[#9b9794]">View</div>
        <div className="w-[58px] pl-[5px] h-[18px] leading-[18px] border-r border-[#9b9794]">Add-ins</div>
        <div className="pl-[5px] h-[18px] leading-[18px]">Help</div>
      </div>
      <div className="flex flex-1">
        <RGroup w="w-[68px]" label="Clipboard">
          <RBtn><svg width="17" height="20" viewBox="0 0 17 20" fill="none"><path d="M2 4h10v13H2z" stroke="#c06a20" strokeWidth="1.3" /><rect x="5" y="1.5" width="4" height="4" fill="#e4e4e4" stroke="#555" /><rect x="8" y="9" width="8" height="9" fill="#fff" stroke="#333" /></svg></RBtn>
        </RGroup>
        <RGroup w="w-[54px]" label="Font">
          <RBtn><svg width="18" height="20" viewBox="0 0 18 20"><text x="9" y="13" textAnchor="middle" fontSize="14" fill="#222" fontFamily="Open Sans">A</text><rect x="1.5" y="15" width="15" height="3.5" fill="#111" /></svg></RBtn>
        </RGroup>
        <RGroup w="w-[73px]" label="Alignment">
          <RBtn><svg width="16" height="14" viewBox="0 0 16 14" stroke="#222"><path d="M1 1.5h14M3.5 5h9M1 8.5h14M4 12h8" /></svg></RBtn>
        </RGroup>
        <RGroup w="w-[74px]" label="Sensitivity" name="Sensitivity">
          <div className="h-[34px] w-[32px] -mt-[2px] flex items-center justify-center">
            <svg width="28" height="30" viewBox="0 0 28 30"><path d="M1 6h14l6 6v17H1z" fill="#f6f6f6" stroke="#1a72c0" strokeWidth="1.4" /><path d="M6 16l7 8 4-4-7-8z" fill="#1a72c0" /><path d="M12 9l8-7 6 6-8 7z" fill="#1a72c0" /><path d="M14 12l8-7M19 14l5-5" stroke="#fff" strokeWidth="1.2" /></svg>
          </div>
        </RGroup>
        <RGroup w="w-[61px]" label="Number">
          <RBtn><span className="text-[19px] leading-none text-[#222]">%</span></RBtn>
        </RGroup>
        <div className="w-[180px] h-[89px] mt-[5px] border-r border-[#8f8d8a] relative pl-[12px] shrink-0">
          <StyleRow t="Conditional Formatting" icon={<GridIco mode="cf" />} />
          <StyleRow t="Format as Table" icon={<GridIco mode="tbl" />} />
          <StyleRow t="Cell Styles" icon={<GridIco mode="cs" />} />
          <span className="absolute bottom-[-3px] left-[76px] text-[11px] leading-[14px] text-[#333]">Styles</span>
        </div>
      </div>
    </div>
    <div className="h-[45px] bg-[#656565] shrink-0 flex items-start pt-[10px] shadow-[inset_0_5px_4px_-3px_rgba(0,0,0,0.5)]">
      <div className="ml-[4px] w-[102px] h-[25px] bg-[#a8a8a8] border border-[#7c7c7c] flex items-center justify-between pl-[7px] pr-[7px]">
        <span className="text-[12.5px] text-[#5a5a5a]">A1</span>
        <svg width="9" height="5" viewBox="0 0 9 5"><path d="M0 0h9L4.5 5z" fill="#333" /></svg>
      </div>
      <div className="ml-[13px] w-[3px] h-[25px] flex flex-col items-center justify-center gap-[3px]">
        <span className="w-[2px] h-[2px] bg-white" /><span className="w-[2px] h-[2px] bg-white" /><span className="w-[2px] h-[2px] bg-white" />
      </div>
      <div className="ml-[13px] w-[110px] h-[25px] bg-[#a8a8a8] border border-[#7c7c7c] flex items-center">
        <svg width="12" height="12" viewBox="0 0 12 12" className="ml-[12px]" stroke="#828282" strokeWidth="1.6"><path d="M1 1l10 10M11 1L1 11" /></svg>
        <svg width="14" height="12" viewBox="0 0 14 12" className="ml-[20px]" fill="none" stroke="#828282" strokeWidth="2"><path d="M1 6l4 4 8-9" /></svg>
        <span className="ml-[19px] text-[13px] italic font-bold text-[#333] font-['Liberation_Serif',serif]">fx</span>
      </div>
      <div className="ml-[3px] flex-1 h-[25px] bg-[#a8a8a8] border border-[#7c7c7c]" />
    </div>
    <div className="h-[20px] bg-[#656565] flex shrink-0 text-[12.5px] text-[#efefef]">
      <div className="w-[25px] shrink-0 relative"><svg width="12" height="12" viewBox="0 0 12 12" className="absolute left-[10px] top-[6px]"><path d="M12 0v12H0z" fill="#e4e4e4" /></svg></div>
      {colL.map((c, i) => (
        <div key={c} className={colW[i] + " shrink-0 flex items-center justify-center border-r border-[#9a9a9a] " + (i === 0 ? "bg-[#262626]" : "")}>{c}</div>
      ))}
    </div>
    <div className="h-[20px] flex shrink-0 bg-white relative text-[13px]">
      <div className="w-[25px] bg-[#262626] text-white flex items-center pl-[8px] text-[12.5px] shrink-0">1</div>
      <Cell w={0} cls="border-[2px] border-[#217346]" />
      <Cell w={1} c="Time [s]" />
      <Cell w={2} c="Minimum [mm]" />
      <Cell w={3} c="Maximum [mm]" />
      <Cell w={4} c="Average [mm]" />
      <Cell w={5} />
      <Cell w={6} />
      <span className="absolute left-[51px] top-[16px] w-[5px] h-[5px] bg-[#217346] border border-white" />
    </div>
    {xD.map((d, i) => (
      <div key={i} className="h-[20px] flex shrink-0 bg-white text-[12.5px]">
        <div className="w-[25px] bg-[#656565] border-b border-[#8a8a8a] text-[#f0f0f0] flex items-center justify-center pt-[2px] shrink-0">{i + 2}</div>
        <Cell w={0} c={String(i + 1)} />
        <Cell w={1} c={String(i + 1)} />
        <Cell w={2} c="0" />
        <Cell w={3} c={d} />
        <Cell w={4} c={xE[i]} />
        <Cell w={5} />
        <Cell w={6} />
      </div>
    ))}
    <div className="h-[28px] bg-[#656565] flex items-start shrink-0 relative">
      <svg width="6" height="8" viewBox="0 0 6 8" className="ml-[27px] mt-[10px]"><path d="M6 0v8L0 4z" fill="#8a8a8a" /></svg>
      <svg width="6" height="8" viewBox="0 0 6 8" className="ml-[22px] mt-[10px]"><path d="M0 0v8l6-4z" fill="#8a8a8a" /></svg>
      <div className="ml-[43px] w-[67px] h-[25px] bg-white border-b-[2px] border-[#217346] flex items-center justify-center pt-[3px] text-[#217346] font-bold text-[12.5px]">Results</div>
      <svg width="18" height="18" viewBox="0 0 18 18" className="ml-[33px] mt-[5px]" fill="none" stroke="#fff" strokeWidth="1.3"><circle cx="9" cy="9" r="7.8" /><path d="M5 9h8M9 5v8" strokeWidth="1.8" /></svg>
      <div className="ml-[205px] mt-[9px] flex flex-col gap-[3px]"><span className="w-[2px] h-[2px] bg-white" /><span className="w-[2px] h-[2px] bg-white" /><span className="w-[2px] h-[2px] bg-white" /></div>
      <div className="ml-[14px] mt-[7px] w-[90px] h-[15px] bg-[#9a9a9a] border border-[#444] flex">
        <div className="w-[14px] bg-[#9a9a9a] border-r border-[#555] flex items-center justify-center"><svg width="4" height="7" viewBox="0 0 4 7"><path d="M4 0v7L0 3.5z" fill="#222" /></svg></div>
      </div>
    </div>
    <div className="h-[22px] bg-[#bdb9b5] border-t border-[#2f2f2f] flex items-center shrink-0 text-[11px] text-[#333]">
      <span className="ml-[7px]">Ready</span>
      <svg width="15" height="16" viewBox="0 0 15 16" fill="none" stroke="#333" className="ml-[17px]"><circle cx="7" cy="3" r="2" /><path d="M1 6h12M4 6l1 8M10 6l-1 4M8 13l2 2 4-4" /></svg>
      <span className="ml-[3px] whitespace-nowrap">Accessibility: Good to go</span>
      <div className="ml-auto w-[40px] h-[21px] bg-[#a5a19d] flex items-center justify-center">
        <svg width="13" height="12" viewBox="0 0 13 12" fill="none" stroke="#333"><path d="M.5.5h12v11H.5zM4.5.5v11M8.5.5v11M.5 4h12M.5 8h12" /></svg>
      </div>
      <div className="w-[40px] flex justify-center">
        <svg width="13" height="12" viewBox="0 0 13 12" fill="none" stroke="#333"><path d="M.5.5h12v11H.5zM3 3h7M3 5.5h7M3 8h7" /></svg>
      </div>
      <div className="w-[40px] mr-[7px] flex justify-center">
        <svg width="13" height="12" viewBox="0 0 13 12" fill="none" stroke="#333"><path d="M.5.5h12v11H.5zM.5 6h6V.5M9 1v4" /></svg>
      </div>
    </div>
  </div>
);

const Scripting = () => (
  <div className="flex-1 flex min-w-0">
    <div className="w-[10px] bg-[#f0f0f0] border-r border-[#c8c8c8] shrink-0" />
    <div className="flex-1 flex flex-col bg-white">
      <div className="h-[14px] bg-[#eeeef2] flex items-center pl-[2px]">
        <span className="text-[11.5px] leading-[14px] text-[#3f4f60] whitespace-nowrap">Mechanical Scripting</span>
        <Dots className="flex-1 h-[7px] ml-[5px]" />
      </div>
      <div className="h-[9px] bg-[#eeeef2]" />
      <div className="h-[24px] bg-white border-t border-[#c8c8c8] flex items-center pl-[6px]">
        <span className="text-[12px] text-[#222] whitespace-nowrap">Editor</span>
        <svg width="12" height="14" viewBox="0 0 12 14" fill="none" stroke="#333" className="ml-[15px]"><path d="M.5.5h8l3 3v10H.5zM3 6h6M3 8.5h6M3 11h6" /></svg>
        <svg width="15" height="14" viewBox="0 0 15 14" className="ml-[8px]"><path d="M.5 5h11v8.5H.5z" fill="#f6dd85" stroke="#555" /><path d="M4 4c1-3 6-4 9 0" stroke="#d02020" fill="none" strokeWidth="1.3" /></svg>
        <svg width="13" height="14" viewBox="0 0 13 14" fill="none" stroke="#2a7ae2" className="ml-[7px]"><path d="M.5.5h10l2 2v11H.5zM3 .5v4h6v-4M3 13.5V8h7v5.5" /></svg>
        <svg width="7" height="4" viewBox="0 0 7 4" className="ml-[5px]"><path d="M0 0h7L3.5 4z" fill="#222" /></svg>
        <div className="w-px h-[18px] bg-[#ccc] ml-[4px]" />
        <svg width="15" height="15" viewBox="0 0 15 15" fill="none" stroke="#333" className="ml-[5px]"><path d="M.5.5h8l1 1v12H.5zM2.5 5h4M2.5 8h4M2.5 11h4" /><circle cx="10" cy="9" r="4" fill="#f6dd85" /><path d="M9 7l3 2-3 2z" fill="#333" /></svg>
        <svg width="14" height="14" viewBox="0 0 14 14" className="ml-[6px]"><path d="M0 0l14 7L0 14z" fill="#0d9b0d" /></svg>
        <div className="w-px h-[18px] bg-[#ccc] ml-[6px]" />
        <svg width="15" height="15" viewBox="0 0 15 15" className="ml-[5px]"><circle cx="7.5" cy="7.5" r="7" fill="#e01818" stroke="#555" /></svg>
        <svg width="7" height="4" viewBox="0 0 7 4" className="ml-[4px]"><path d="M0 0h7L3.5 4z" fill="#222" /></svg>
        <svg width="15" height="14" viewBox="0 0 15 14" className="ml-[5px]" fill="none" stroke="#333"><path d="M.5.5h7l3 3v10h-10zM2.5 5h5M2.5 8h5" /><rect x="6" y="6" width="8" height="7" fill="#e8b820" stroke="none" /></svg>
        <svg width="7" height="4" viewBox="0 0 7 4" className="ml-[4px]"><path d="M0 0h7L3.5 4z" fill="#222" /></svg>
        <svg width="15" height="14" viewBox="0 0 15 14" className="ml-[4px]" fill="none" stroke="#333"><path d="M.5.5h7l3 3v10h-10z" /><circle cx="6" cy="9" r="2.5" fill="#ddd" /><circle cx="11" cy="9" r="2.5" fill="#ddd" /></svg>
        <svg width="7" height="4" viewBox="0 0 7 4" className="ml-[4px]"><path d="M0 0h7L3.5 4z" fill="#222" /></svg>
      </div>
    </div>
  </div>
);

export default function App() {
  return (
    <div className="relative w-[1446px] h-[939px] overflow-hidden bg-white font-['Open_Sans',sans-serif] flex">
      <div className="w-[400px] shrink-0 flex flex-col bg-[#eeeef2] border-r-[4px] border-[#eeeef2]">
        <Outline />
        <Details />
      </div>
      <div className="w-[532px] shrink-0 flex flex-col bg-[#eeeef2]">
        <Toolbar />
        <Viewport />
        <div className="h-[3px]" />
        <div className="flex-1 flex min-h-0">
          <Graph />
          <Tabular />
        </div>
      </div>
      <Scripting />
      <Excel />
      <svg width="380" height="160" viewBox="570 330 380 160" className="absolute left-[570px] top-[330px] z-20 pointer-events-none" fill="none" stroke="#1616e6" strokeWidth="2" strokeLinecap="round">
        <path d="M584 475C584 462 588 446 595 437C601 428 606 424 613 416C624 406 632 402 641 398C657 391 672 382 686 378C702 372 716 367 731 365C750 363 765 362 779 360C800 356 815 353 834 353C855 352 885 352 915 354C922 355 931 355 931 358C931 362 925 366 917 368C908 371 900 376 893 382" />
        <path d="M898 340C902 345 908 349 920 353" />
      </svg>
    </div>
  );
}
